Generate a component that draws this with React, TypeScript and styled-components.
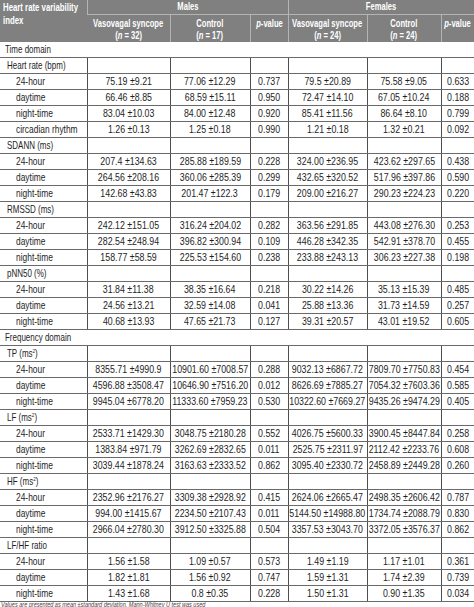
import React from "react";
import styled, { createGlobalStyle } from "styled-components";

const Global = createGlobalStyle`
  html, body { margin: 0; padding: 0; background: #ffffff; }
  body {
    font-family: "Liberation Sans", Arial, sans-serif;
    color: #1e1e1e;
  }
`;

const Page = styled.div`
  width: 474px;
  display: flex;
  flex-direction: column;
`;

const Table = styled.table`
  width: 474px;
  table-layout: fixed;
  border-collapse: collapse;
  font-size: 10.5px;
`;

const Txt = styled.span<{ $s?: number; $left?: boolean }>`
  display: inline-block;
  white-space: nowrap;
  transform: scaleX(${(p) => p.$s ?? 0.84});
  transform-origin: ${(p) => (p.$left ? "left center" : "center center")};
  margin: ${(p) => (p.$left ? "0 -60px 0 0" : "0 -40px")};
`;

const HeadCell = styled.th<{ $align?: string; $pad?: string; $lh?: number; $bottom?: boolean }>`
  background: #808080;
  color: #ffffff;
  font-weight: bold;
  font-size: 10px;
  line-height: ${(p) => p.$lh ?? 12}px;
  text-align: ${(p) => p.$align || "center"};
  vertical-align: top;
  padding: ${(p) => p.$pad || "1px 0 1px 0"};
  border-left: 1px solid #b4b4b4;
  border-bottom: ${(p) => (p.$bottom ? "1px solid #b4b4b4" : "none")};
  &:first-child { border-left: none; }
`;

const SectionCell = styled.td`
  padding: 0 0 0 5px;
  line-height: 15px;
  border-bottom: 1px solid #6a6a6a;
  white-space: nowrap;
`;

const LabelCell = styled.td<{ $indent: number }>`
  padding: 0 0 0 ${(p) => p.$indent}px;
  line-height: 15px;
  border-bottom: 1px solid #6a6a6a;
  white-space: nowrap;
`;

const ValueCell = styled.td`
  padding: 0;
  line-height: 15px;
  text-align: center;
  border-bottom: 1px solid #6a6a6a;
  border-left: 1px solid #4e4e4e;
  white-space: nowrap;
`;

const Note = styled.div`
  font-size: 6.5px;
  font-style: italic;
  color: #444444;
  padding: 0 0 0 1px;
  line-height: 6px;
`;

const Sup = styled.sup`
  font-size: 6px;
  line-height: 0;
`;

type Row = [string, string, string, string, string, string, string];
type Group = { title: React.ReactNode; rows: Row[] };
type Section = { name: string; groups: Group[] };

const ms2 = (n: string) => (
  <>
    {n} (ms<Sup>2</Sup>)
  </>
);

const sections: Section[] = [
  {
    name: "Time domain",
    groups: [
      {
        title: "Heart rate (bpm)",
        rows: [
          ["24-hour", "75.19 ±9.21", "77.06 ±12.29", "0.737", "79.5 ±20.89", "75.58 ±9.05", "0.633"],
          ["daytime", "66.46 ±8.85", "68.59 ±15.11", "0.950", "72.47 ±14.10", "67.05 ±10.24", "0.188"],
          ["night-time", "83.04 ±10.03", "84.00 ±12.48", "0.920", "85.41 ±11.56", "86.64 ±8.10", "0.799"],
          ["circadian rhythm", "1.26 ±0.13", "1.25 ±0.18", "0.990", "1.21 ±0.18", "1.32 ±0.21", "0.092"],
        ],
      },
      {
        title: "SDANN (ms)",
        rows: [
          ["24-hour", "207.4 ±134.63", "285.88 ±189.59", "0.228", "324.00 ±236.95", "423.62 ±297.65", "0.438"],
          ["daytime", "264.56 ±208.16", "360.06 ±285.39", "0.299", "432.65 ±320.52", "517.96 ±397.86", "0.590"],
          ["night-time", "142.68 ±43.83", "201.47 ±122.3", "0.179", "209.00 ±216.27", "290.23 ±224.23", "0.220"],
        ],
      },
      {
        title: "RMSSD (ms)",
        rows: [
          ["24-hour", "242.12 ±151.05", "316.24 ±204.02", "0.282", "363.56 ±291.85", "443.08 ±276.30", "0.253"],
          ["daytime", "282.54 ±248.94", "396.82 ±300.94", "0.109", "446.28 ±342.35", "542.91 ±378.70", "0.455"],
          ["night-time", "158.77 ±58.59", "225.53 ±154.60", "0.238", "233.88 ±243.13", "306.23 ±227.38", "0.198"],
        ],
      },
      {
        title: "pNN50 (%)",
        rows: [
          ["24-hour", "31.84 ±11.38", "38.35 ±16.64", "0.218", "30.22 ±14.26", "35.13 ±15.39", "0.485"],
          ["daytime", "24.56 ±13.21", "32.59 ±14.08", "0.041", "25.88 ±13.36", "31.73 ±14.59", "0.257"],
          ["night-time", "40.68 ±13.93", "47.65 ±21.73", "0.127", "39.31 ±20.57", "43.01 ±19.52", "0.605"],
        ],
      },
    ],
  },
  {
    name: "Frequency domain",
    groups: [
      {
        title: ms2("TP"),
        rows: [
          ["24-hour", "8355.71 ±4990.9", "10901.60 ±7008.57", "0.288", "9032.13 ±6867.72", "7809.70 ±7750.83", "0.454"],
          ["daytime", "4596.88 ±3508.47", "10646.90 ±7516.20", "0.012", "8626.69 ±7885.27", "7054.32 ±7603.36", "0.585"],
          ["night-time", "9945.04 ±6778.20", "11333.60 ±7959.23", "0.530", "10322.60 ±7669.27", "9435.26 ±9474.29", "0.405"],
        ],
      },
      {
        title: ms2("LF"),
        rows: [
          ["24-hour", "2533.71 ±1429.30", "3048.75 ±2180.28", "0.552", "4026.75 ±5600.33", "3900.45 ±8447.84", "0.258"],
          ["daytime", "1383.84 ±971.79", "3262.69 ±2832.65", "0.011", "2525.75 ±2311.97", "2112.42 ±2233.76", "0.608"],
          ["night-time", "3039.44 ±1878.24", "3163.63 ±2333.52", "0.862", "3095.40 ±2330.72", "2458.89 ±2449.28", "0.260"],
        ],
      },
      {
        title: ms2("HF"),
        rows: [
          ["24-hour", "2352.96 ±2176.27", "3309.38 ±2928.92", "0.415", "2624.06 ±2665.47", "2498.35 ±2606.42", "0.787"],
          ["daytime", "994.00 ±1415.67", "2234.50 ±2107.43", "0.011", "5144.50 ±14988.80", "1734.74 ±2088.79", "0.830"],
          ["night-time", "2966.04 ±2780.30", "3912.50 ±3325.88", "0.504", "3357.53 ±3043.70", "3372.05 ±3576.37", "0.862"],
        ],
      },
      {
        title: "LF/HF ratio",
        rows: [
          ["24-hour", "1.56 ±1.58", "1.09 ±0.57", "0.573", "1.49 ±1.19", "1.17 ±1.01", "0.361"],
          ["daytime", "1.82 ±1.81", "1.56 ±0.92", "0.747", "1.59 ±1.31", "1.74 ±2.39", "0.739"],
          ["night-time", "1.43 ±1.68", "0.8 ±0.35", "0.228", "1.50 ±1.31", "0.90 ±1.35", "0.034"],
        ],
      },
    ],
  },
];

const widths = [87, 83, 80, 38, 79, 74, 33];

const SubHead = ({ n }: { n: number }) => (
  <>
    <Txt $s={0.76}>Vasovagal syncope</Txt>
    <br />
    <Txt $s={0.76}>
      (<i>n</i> = {n})
    </Txt>
  </>
);

const CtrlHead = ({ n }: { n: number }) => (
  <>
    <Txt $s={0.76}>Control</Txt>
    <br />
    <Txt $s={0.76}>
      (<i>n</i> = {n})
    </Txt>
  </>
);

const PHead = () => (
  <Txt $s={0.76}>
    <i>p</i>-value
  </Txt>
);

export default function App() {
  return (
    <Page>
      <Global />
      <Table>
        <colgroup>
          {widths.map((w, i) => (
            <col key={i} style={{ width: w }} />
          ))}
        </colgroup>
        <thead>
          <tr>
            <HeadCell $align="left" rowSpan={2} $pad="1px 0 0 3px" $lh={13}>
              <Txt $s={0.78} $left>
                Heart rate variability
              </Txt>
              <br />
              <Txt $s={0.78} $left>
                index
              </Txt>
            </HeadCell>
            <HeadCell colSpan={3} $bottom>
              <Txt $s={0.76}>Males</Txt>
            </HeadCell>
            <HeadCell colSpan={3} $bottom>
              <Txt $s={0.76}>Females</Txt>
            </HeadCell>
          </tr>
          <tr>
            <HeadCell $pad="3px 0 0 0">
              <SubHead n={32} />
            </HeadCell>
            <HeadCell $pad="3px 0 0 0">
              <CtrlHead n={17} />
            </HeadCell>
            <HeadCell $pad="3px 0 0 0">
              <PHead />
            </HeadCell>
            <HeadCell $pad="3px 0 0 0">
              <SubHead n={24} />
            </HeadCell>
            <HeadCell $pad="3px 0 0 0">
              <CtrlHead n={24} />
            </HeadCell>
            <HeadCell $pad="3px 0 0 0">
              <PHead />
            </HeadCell>
          </tr>
        </thead>
        <tbody>
          {sections.map((s) => (
            <React.Fragment key={s.name}>
              <tr>
                <SectionCell colSpan={7}>
                  <Txt $s={0.76} $left>
                    {s.name}
                  </Txt>
                </SectionCell>
              </tr>
              {s.groups.map((g, gi) => (
                <React.Fragment key={gi}>
                  <tr>
                    <LabelCell $indent={7}>
                      <Txt $s={0.76} $left>
                        {g.title}
                      </Txt>
                    </LabelCell>
                    <ValueCell />
                    <ValueCell />
                    <ValueCell />
                    <ValueCell />
                    <ValueCell />
                    <ValueCell />
                  </tr>
                  {g.rows.map((r, ri) => (
                    <tr key={ri}>
                      <LabelCell $indent={16}>
                        <Txt $s={0.8} $left>
                          {r[0]}
                        </Txt>
                      </LabelCell>
                      {r.slice(1).map((v, vi) => (
                        <ValueCell key={vi}>
                          <Txt $s={0.84}>{v}</Txt>
                        </ValueCell>
                      ))}
                    </tr>
                  ))}
                </React.Fragment>
              ))}
            </React.Fragment>
          ))}
        </tbody>
      </Table>
      <Note>
        <Txt $s={0.85} $left>
          Values are presented as mean ±standard deviation. Mann-Whitney <i>U</i> test was used
        </Txt>
      </Note>
    </Page>
  );
}
